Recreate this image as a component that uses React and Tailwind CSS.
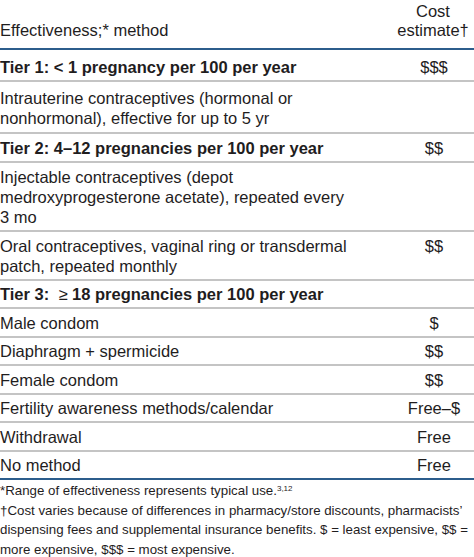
export default function App() {
  const rows = [
    { t: "Tier 1: < 1 pregnancy per 100 per year", c: "$$$", b: true, p: "pt-[7px] pb-[3px]" },
    { t: ["Intrauterine contraceptives (hormonal or", "nonhormonal), effective for up to 5 yr"], c: "", p: "pt-[6px] pb-[4px]" },
    { t: "Tier 2: 4–12 pregnancies per 100 per year", c: "$$", b: true, p: "pt-[4px] pb-[3px]" },
    { t: ["Injectable contraceptives (depot", "medroxyprogesterone acetate), repeated every", "3 mo"], c: "", p: "pt-[4px] pb-[3px]" },
    { t: ["Oral contraceptives, vaginal ring or transdermal", "patch, repeated monthly"], c: "$$", p: "pt-[3.5px] pb-[3px]" },
    { t: "tier3", c: "", b: true, p: "pt-[3.5px] pb-[3px]" },
    { t: "Male condom", c: "$", p: "pt-[3.5px] pb-[3px]" },
    { t: "Diaphragm + spermicide", c: "$$", p: "pt-[3.5px] pb-[3px]" },
    { t: "Female condom", c: "$$", p: "pt-[3.5px] pb-[3px]" },
    { t: "Fertility awareness methods/calendar", c: "Free–$", p: "pt-[3.5px] pb-[3px]" },
    { t: "Withdrawal", c: "Free", p: "pt-[3.5px] pb-[3px]" },
    { t: "No method", c: "Free", p: "pt-[3.5px] pb-[3px]" },
  ];
  return (
    <div className="w-[474px] h-[557px] bg-white overflow-hidden text-[#1f1d1e]" style={{ fontFamily: '"Liberation Sans", Arial, sans-serif' }}>
      <div className="flex items-end h-[50px] pb-[8px] text-[16.5px] leading-[19px] border-b-2 border-[#2c5d8c]">
        <div className="flex-1">Effectiveness;* method</div>
        <div className="w-[80px] pr-[2px] text-center">Cost<br />estimate†</div>
      </div>
      {rows.map((r, i) => (
        <div key={i} className={`flex ${r.p} text-[16.5px] leading-[20px] ${i === rows.length - 1 ? "border-b-2 border-[#2c5d8c]" : "border-b-2 border-[#c4c4c4]"}`}>
          <div className={`flex-1 ${r.b ? "font-bold" : ""}`}>
            {r.t === "tier3" ? (
              <span>Tier 3: <span className="font-normal">&nbsp;≥</span> 18 pregnancies per 100 per year</span>
            ) : Array.isArray(r.t) ? (
              r.t.map((l, j) => <div key={j}>{l}</div>)
            ) : (
              r.t
            )}
          </div>
          <div className="w-[80px] text-center">{r.c}</div>
        </div>
      ))}
      <div className="pt-[1px] text-[13.3px] leading-[19.5px] whitespace-nowrap">
        <div>*Range of effectiveness represents typical use.<sup className="text-[8px]">3,12</sup></div>
        <div>†Cost varies because of differences in pharmacy/store discounts, pharmacists’</div>
        <div>dispensing fees and supplemental insurance benefits. $ = least expensive, $$ =</div>
        <div>more expensive, $$$ = most expensive.</div>
      </div>
    </div>
  );
}
